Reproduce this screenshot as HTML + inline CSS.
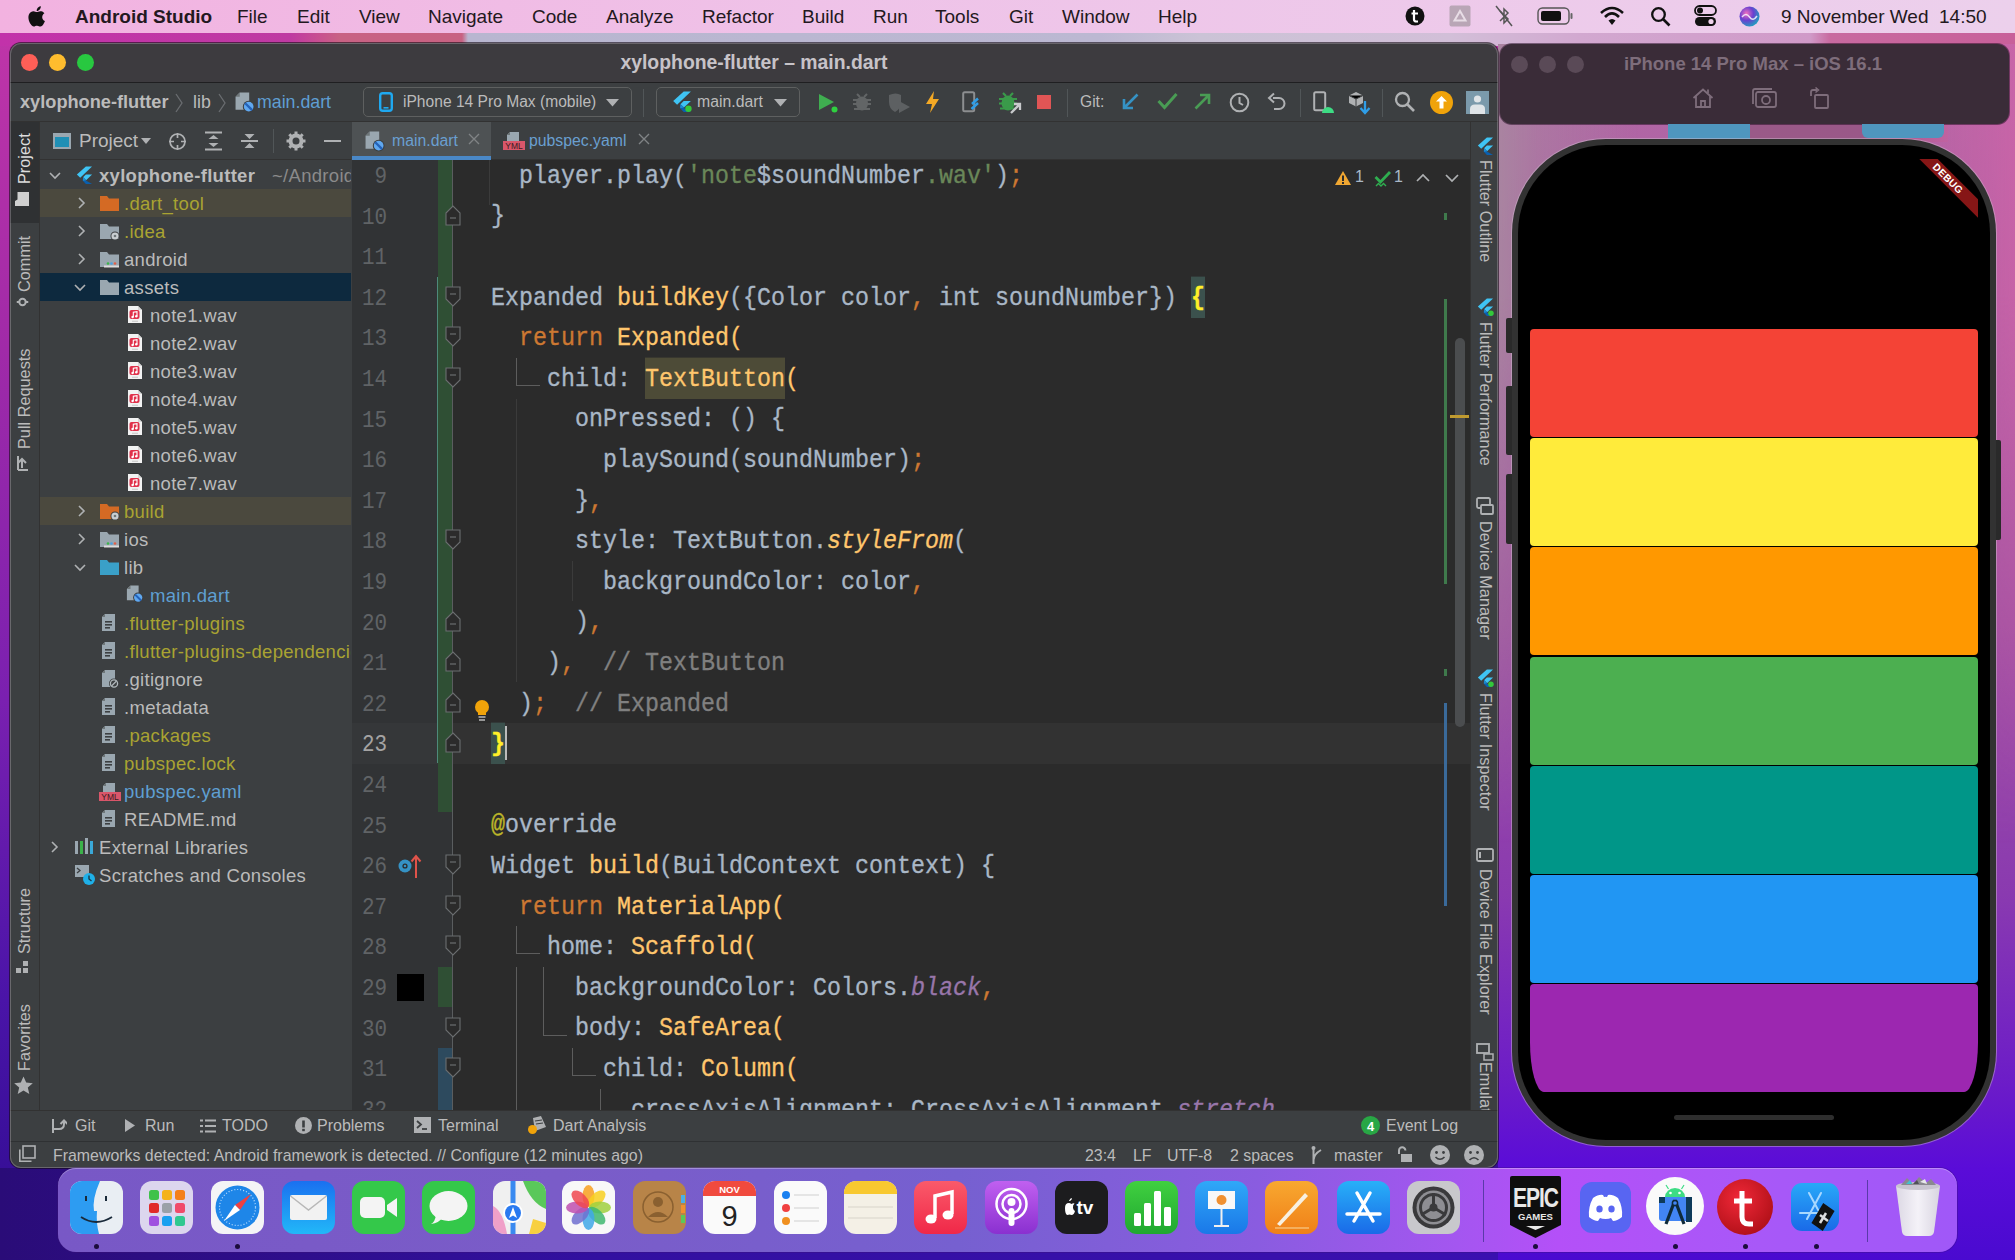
<!DOCTYPE html><html><head><meta charset="utf-8"><style>
*{box-sizing:border-box;margin:0;padding:0}
html,body{width:2015px;height:1260px;overflow:hidden}
body{position:relative;font-family:"Liberation Sans",sans-serif;background:#5a1cb0}
.a{position:absolute}
.nw{white-space:nowrap}
.mono{font-family:"Liberation Mono",monospace}
#menubar{position:absolute;left:0;top:0;width:2015px;height:33px;background:linear-gradient(90deg,#f2b2e0 0%,#efc2e8 40%,#ecd0ec 100%);color:#231820;font-size:19px}
#menubar span{position:absolute;top:6px;white-space:nowrap}
#ide{position:absolute;left:10px;top:43px;width:1488px;height:1125px;border-radius:11px;overflow:hidden;background:#3c3f41;box-shadow:0 0 0 1px rgba(20,10,20,.6)}
#ideb{position:absolute;left:10px;top:43px;width:1488px;height:1125px;border-radius:11px;box-shadow:inset 0 0 0 1px rgba(190,180,190,.35);pointer-events:none}
.title{position:absolute;left:0;top:0;width:1488px;height:40px;background:#3d3b3f;border-bottom:1px solid #1f1f21}
.tl{position:absolute;top:11px;width:17px;height:17px;border-radius:50%}
.nav{position:absolute;left:0;top:41px;width:1488px;height:38px;background:#3c3f41;border-bottom:1px solid #323232;color:#bbbbbb;font-size:18.5px}
.nav span{position:absolute;white-space:nowrap;top:8px}
.combo{position:absolute;border:1px solid #5e6060;border-radius:5px;height:29px;top:4px}
.sep{position:absolute;width:1px;background:#515658}
.lstrip{position:absolute;left:0;top:79px;width:30px;height:988px;background:#3c3f41;border-right:1px solid #323232}
.vlab{position:absolute;white-space:nowrap;color:#bbbbbb;font-size:17px;transform-origin:0 0}
.proj{position:absolute;left:30px;top:79px;width:311px;height:988px;background:#3c3f41;overflow:hidden}
.phead{position:absolute;left:0;top:0;width:311px;height:38px;border-bottom:1px solid #323232}
.row{position:absolute;left:0;width:311px;height:28px;white-space:nowrap;font-size:18.5px;color:#bbbbbb;letter-spacing:0.3px}
.row span{position:absolute;top:4px}
.tabs{position:absolute;left:342px;top:79px;width:1118px;height:38px;background:#3c3f41;border-bottom:1px solid #323232}
.gut{position:absolute;left:342px;top:117px;width:101px;height:950px;background:#313335;overflow:hidden}
.ed{position:absolute;left:443px;top:117px;width:1017px;height:950px;background:#2b2b2b;overflow:hidden}
.rstrip{position:absolute;left:1460px;top:79px;width:28px;height:988px;background:#3c3f41;border-left:1px solid #323232}
.btools{position:absolute;left:0;top:1067px;width:1488px;height:31px;background:#3c3f41;border-top:1px solid #323232;font-size:16px;color:#bbbbbb}
.btools span{position:absolute;white-space:nowrap;top:6px}
.status span{position:absolute;white-space:nowrap;top:5px}
.status{position:absolute;left:0;top:1098px;width:1488px;height:27px;background:#3c3f41;border-top:1px solid #2f3133;font-size:15.9px;color:#bbbbbb}
.ln{position:absolute;right:66px;width:60px;text-align:right;font-size:22.5px;color:#606366;font-family:"Liberation Mono",monospace;transform:translateY(2.5px) scale(0.93,1.1);transform-origin:100% 50%}
.cl{position:absolute;left:10px;white-space:pre;font-size:23.33px;color:#a9b7c6;font-family:"Liberation Mono",monospace;line-height:28px;transform:translateY(2px) scaleY(1.09);transform-origin:0 26.5px;-webkit-text-stroke-width:0.3px}
.k{color:#cc7832}.f{color:#ffc66d}.s{color:#6a8759}.c{color:#808080}.p{color:#9876aa;font-style:italic}.fi{color:#ffc66d;font-style:italic}.an{color:#bbb529}
</style></head><body>
<div class="a" style="left:0;top:0;width:2015px;height:1260px;background:linear-gradient(180deg,#c236a8 0px,#a02aa8 350px,#7a20b0 700px,#4a14a8 1000px,#2e0c90 1260px)"></div>
<div class="a" style="left:0;top:30px;width:2015px;height:16px;background:linear-gradient(90deg,#c232aa 0px,#bf3aa2 290px,#c85090 320px,#c86284 340px,#c86282 462px,#b8b6d0 468px,#bcb8d2 1100px,#cbc3d6 1200px,#d2bfd8 1450px,#d2a8d0 1580px,#d09ac8 1810px,#c86aa0 1830px,#c8609a 2015px)"></div>
<div class="a" style="left:1498px;top:44px;width:517px;height:1124px;background:linear-gradient(180deg,#b46aa6 0px,#aa5ca2 250px,#a050a2 580px,#8a3ab0 850px,#6c1cc8 1040px,#5a0cd8 1124px)"></div>
<div class="a" style="left:1498px;top:44px;width:517px;height:1124px;background:linear-gradient(90deg,rgba(168,136,160,.9) 0px,rgba(168,136,160,.5) 40px,rgba(168,136,160,0) 140px,rgba(200,100,170,0) 400px,rgba(205,100,168,.8) 517px);-webkit-mask-image:linear-gradient(180deg,#000 0px,#000 250px,rgba(0,0,0,.4) 550px,transparent 800px)"></div>
<div class="a" style="left:1668px;top:120px;width:280px;height:22px;background:linear-gradient(90deg,#a87098 0px,#9a5a88 82px,#9a5888 194px,#c062a0 280px)"></div>
<div class="a" style="left:0;top:1168px;width:1498px;height:92px;background:linear-gradient(90deg,#2a0c78 0px,#3210a0 600px,#3a10b0 1498px)"></div>
<div class="a" style="left:1498px;top:1168px;width:517px;height:92px;background:linear-gradient(180deg,#5a0cd8 0px,#4a0ad0 92px)"></div>
<div id="menubar">
<span style="left:75px;font-weight:bold;">Android Studio</span>
<span style="left:237px;">File</span>
<span style="left:297px;">Edit</span>
<span style="left:359px;">View</span>
<span style="left:428px;">Navigate</span>
<span style="left:532px;">Code</span>
<span style="left:606px;">Analyze</span>
<span style="left:702px;">Refactor</span>
<span style="left:802px;">Build</span>
<span style="left:873px;">Run</span>
<span style="left:935px;">Tools</span>
<span style="left:1009px;">Git</span>
<span style="left:1062px;">Window</span>
<span style="left:1158px;">Help</span>
<span style="left:1781px;">9 November Wed</span>
<span style="left:1939px;">14:50</span>
</div>
<div id="ide">
<div class="title"><div class="tl" style="left:11px;background:#fe5f57"></div><div class="tl" style="left:39px;background:#febc2e"></div><div class="tl" style="left:67px;background:#28c840"></div>
<div class="a nw" style="left:0;width:1488px;top:8px;text-align:center;font-weight:bold;font-size:19.4px;color:#c7c3c8;padding-left:0px">xylophone-flutter – main.dart</div></div>
<div class="nav">
<span style="left:10px;top:8px;font-weight:bold;font-size:18.2px">xylophone-flutter</span>
<span style="left:183px;top:8px;font-size:17.75px">lib</span>
<span style="left:247px;top:8px;font-size:17.75px;color:#5f9ed3">main.dart</span>
<div class="combo" style="left:353px;top:3px;width:269px;height:30px"></div>
<span style="left:393px;top:9px;font-size:15.6px">iPhone 14 Pro Max (mobile)</span>
<div class="sep" style="left:633px;top:5px;height:28px"></div>
<div class="combo" style="left:646px;top:3px;width:144px;height:30px"></div>
<span style="left:687px;top:9px;font-size:15.8px">main.dart</span>
<div class="sep" style="left:1057px;top:5px;height:28px"></div>
<span style="left:1070px;top:9px;font-size:15.6px">Git:</span>
<div class="sep" style="left:1290px;top:5px;height:28px"></div>
<div class="sep" style="left:1372px;top:5px;height:28px"></div>
</div>
<div class="lstrip">
<div class="a" style="left:0;top:0;width:29px;height:101px;background:#2f3133"></div>
<div class="vlab" style="left:5px;top:62px;font-size:16.3px;transform:rotate(-90deg);color:#dcdcdc">Project</div>
<div class="vlab" style="left:5px;top:170px;font-size:16.3px;transform:rotate(-90deg);">Commit</div>
<div class="vlab" style="left:5px;top:327px;font-size:16.3px;transform:rotate(-90deg);">Pull Requests</div>
<div class="vlab" style="left:5px;top:832px;font-size:16.3px;transform:rotate(-90deg);">Structure</div>
<div class="vlab" style="left:5px;top:949px;font-size:16.3px;transform:rotate(-90deg);">Favorites</div>
</div>
<div class="proj"><div class="phead">
<div class="a nw" style="left:39px;top:8px;font-size:19px;color:#bbbbbb">Project</div>
</div>
<div class="row" style="top:39px;">
<span style="left:59px;color:#bbbbbb;font-weight:bold">xylophone-flutter</span><span style="left:232px;color:#8b8b8b">~/AndroidStudioProjects/xylophone-flutter</span>
</div>
<div class="row" style="top:67px;background:#4b493e;">
<span style="left:84px;color:#a9a332;">.dart_tool</span>
</div>
<div class="row" style="top:95px;">
<span style="left:84px;color:#a9a332;">.idea</span>
</div>
<div class="row" style="top:123px;">
<span style="left:84px;color:#bbbbbb;">android</span>
</div>
<div class="row" style="top:151px;background:#0d293e;">
<span style="left:84px;color:#bbbbbb;">assets</span>
</div>
<div class="row" style="top:179px;">
<span style="left:110px;color:#bbbbbb;">note1.wav</span>
</div>
<div class="row" style="top:207px;">
<span style="left:110px;color:#bbbbbb;">note2.wav</span>
</div>
<div class="row" style="top:235px;">
<span style="left:110px;color:#bbbbbb;">note3.wav</span>
</div>
<div class="row" style="top:263px;">
<span style="left:110px;color:#bbbbbb;">note4.wav</span>
</div>
<div class="row" style="top:291px;">
<span style="left:110px;color:#bbbbbb;">note5.wav</span>
</div>
<div class="row" style="top:319px;">
<span style="left:110px;color:#bbbbbb;">note6.wav</span>
</div>
<div class="row" style="top:347px;">
<span style="left:110px;color:#bbbbbb;">note7.wav</span>
</div>
<div class="row" style="top:375px;background:#4b493e;">
<span style="left:84px;color:#a9a332;">build</span>
</div>
<div class="row" style="top:403px;">
<span style="left:84px;color:#bbbbbb;">ios</span>
</div>
<div class="row" style="top:431px;">
<span style="left:84px;color:#bbbbbb;">lib</span>
</div>
<div class="row" style="top:459px;">
<span style="left:110px;color:#5f9fd2;">main.dart</span>
</div>
<div class="row" style="top:487px;">
<span style="left:84px;color:#a9a332;">.flutter-plugins</span>
</div>
<div class="row" style="top:515px;">
<span style="left:84px;color:#a9a332;">.flutter-plugins-dependencies</span>
</div>
<div class="row" style="top:543px;">
<span style="left:84px;color:#bbbbbb;">.gitignore</span>
</div>
<div class="row" style="top:571px;">
<span style="left:84px;color:#bbbbbb;">.metadata</span>
</div>
<div class="row" style="top:599px;">
<span style="left:84px;color:#a9a332;">.packages</span>
</div>
<div class="row" style="top:627px;">
<span style="left:84px;color:#a9a332;">pubspec.lock</span>
</div>
<div class="row" style="top:655px;">
<span style="left:84px;color:#5f9fd2;">pubspec.yaml</span>
</div>
<div class="row" style="top:683px;">
<span style="left:84px;color:#bbbbbb;">README.md</span>
</div>
<div class="row" style="top:711px;">
<span style="left:59px;color:#bbbbbb;">External Libraries</span>
</div>
<div class="row" style="top:739px;">
<span style="left:59px;color:#bbbbbb;">Scratches and Consoles</span>
</div>
</div>
<div class="tabs">
<div class="a" style="left:0;top:0;width:139px;height:37px;background:#4e5254"></div>
<div class="a" style="left:0;top:34px;width:139px;height:4px;background:#4a88c7"></div>
<div class="a nw" style="left:40px;top:10px;font-size:15.8px;color:#6a9fd0">main.dart</div>
<div class="a nw" style="left:177px;top:10px;font-size:15.8px;color:#6a9fd0">pubspec.yaml</div>
</div>
<div class="gut">
<div class="a" style="left:0;top:563.1px;width:101px;height:40.6px;background:#353739"></div>
<div class="ln" style="top:1.0px;color:#606366">9</div>
<div class="ln" style="top:41.6px;color:#606366">10</div>
<div class="ln" style="top:82.2px;color:#606366">11</div>
<div class="ln" style="top:122.8px;color:#606366">12</div>
<div class="ln" style="top:163.4px;color:#606366">13</div>
<div class="ln" style="top:204.0px;color:#606366">14</div>
<div class="ln" style="top:244.6px;color:#606366">15</div>
<div class="ln" style="top:285.2px;color:#606366">16</div>
<div class="ln" style="top:325.8px;color:#606366">17</div>
<div class="ln" style="top:366.4px;color:#606366">18</div>
<div class="ln" style="top:407.0px;color:#606366">19</div>
<div class="ln" style="top:447.6px;color:#606366">20</div>
<div class="ln" style="top:488.2px;color:#606366">21</div>
<div class="ln" style="top:528.8px;color:#606366">22</div>
<div class="ln" style="top:569.4px;color:#a4a3a3">23</div>
<div class="ln" style="top:610.0px;color:#606366">24</div>
<div class="ln" style="top:650.6px;color:#606366">25</div>
<div class="ln" style="top:691.2px;color:#606366">26</div>
<div class="ln" style="top:731.8px;color:#606366">27</div>
<div class="ln" style="top:772.4px;color:#606366">28</div>
<div class="ln" style="top:813.0px;color:#606366">29</div>
<div class="ln" style="top:853.6px;color:#606366">30</div>
<div class="ln" style="top:894.2px;color:#606366">31</div>
<div class="ln" style="top:934.8px;color:#606366">32</div>
</div>
<div class="ed">
<div class="a" style="left:0;top:563.1px;width:1017px;height:40.6px;background:#323232"></div>
<div class="cl" style="top:-5.3px;line-height:40.6px">    player.play(<span class="s">&#x27;note</span>$soundNumber<span class="s">.wav&#x27;</span>)<span class="k">;</span></div>
<div class="cl" style="top:35.3px;line-height:40.6px">  }</div>
<div class="cl" style="top:75.9px;line-height:40.6px"></div>
<div class="cl" style="top:116.5px;line-height:40.6px">  Expanded <span class="f">buildKey</span>({Color color<span class="k">,</span> int soundNumber}) <span style="display:inline-block;height:37.6px;line-height:40.6px;vertical-align:top;background:#3b514d;color:#ffef28;font-weight:bold">{</span></div>
<div class="cl" style="top:157.1px;line-height:40.6px">    <span class="k">return</span> <span class="f">Expanded(</span></div>
<div class="cl" style="top:197.7px;line-height:40.6px">      child: <span class="f" style="display:inline-block;height:37.6px;line-height:40.6px;vertical-align:top;background:#4d4b37">TextButton</span><span class="f">(</span></div>
<div class="cl" style="top:238.3px;line-height:40.6px">        onPressed: () {</div>
<div class="cl" style="top:278.9px;line-height:40.6px">          playSound(soundNumber)<span class="k">;</span></div>
<div class="cl" style="top:319.5px;line-height:40.6px">        }<span class="k">,</span></div>
<div class="cl" style="top:360.1px;line-height:40.6px">        style: TextButton.<span class="fi">styleFrom</span>(</div>
<div class="cl" style="top:400.7px;line-height:40.6px">          backgroundColor: color<span class="k">,</span></div>
<div class="cl" style="top:441.3px;line-height:40.6px">        )<span class="k">,</span></div>
<div class="cl" style="top:481.9px;line-height:40.6px">      )<span class="k">,</span>  <span class="c">// TextButton</span></div>
<div class="cl" style="top:522.5px;line-height:40.6px">    )<span class="k">;</span>  <span class="c">// Expanded</span></div>
<div class="cl" style="top:563.1px;line-height:40.6px">  <span style="display:inline-block;height:37.6px;line-height:40.6px;vertical-align:top;background:#3b514d;color:#ffef28;font-weight:bold">}</span></div>
<div class="cl" style="top:603.7px;line-height:40.6px"></div>
<div class="cl" style="top:644.3px;line-height:40.6px">  <span class="an">@</span>override</div>
<div class="cl" style="top:684.9px;line-height:40.6px">  Widget <span class="f">build</span>(BuildContext context) {</div>
<div class="cl" style="top:725.5px;line-height:40.6px">    <span class="k">return</span> <span class="f">MaterialApp(</span></div>
<div class="cl" style="top:766.1px;line-height:40.6px">      home: <span class="f">Scaffold(</span></div>
<div class="cl" style="top:806.7px;line-height:40.6px">        backgroundColor: Colors.<span class="p">black</span><span class="k">,</span></div>
<div class="cl" style="top:847.3px;line-height:40.6px">        body: <span class="f">SafeArea(</span></div>
<div class="cl" style="top:887.9px;line-height:40.6px">          child: <span class="f">Column(</span></div>
<div class="cl" style="top:928.5px;line-height:40.6px">            crossAxisAlignment: CrossAxisAlignment.<span class="p">stretch</span><span class="k">,</span></div>
</div>
<div class="rstrip">
<div class="vlab" style="left:24px;top:38px;font-size:16.3px;transform:rotate(90deg)">Flutter Outline</div>
<div class="vlab" style="left:24px;top:200px;font-size:16.3px;transform:rotate(90deg)">Flutter Performance</div>
<div class="vlab" style="left:24px;top:399px;font-size:16.3px;transform:rotate(90deg)">Device Manager</div>
<div class="vlab" style="left:24px;top:571px;font-size:16.3px;transform:rotate(90deg)">Flutter Inspector</div>
<div class="vlab" style="left:24px;top:747px;font-size:16.3px;transform:rotate(90deg)">Device File Explorer</div>
<div class="vlab" style="left:24px;top:940px;font-size:16.3px;transform:rotate(90deg)">Emulator</div>
</div>
<div class="btools">
<span style="left:65px">Git</span>
<span style="left:135px">Run</span>
<span style="left:212px">TODO</span>
<span style="left:307px">Problems</span>
<span style="left:428px">Terminal</span>
<span style="left:543px">Dart Analysis</span>
<span style="left:1376px">Event Log</span>
</div>
<div class="status">
<span style="left:43px">Frameworks detected: Android framework is detected. // Configure (12 minutes ago)</span>
<span style="left:1075px">23:4</span>
<span style="left:1123px">LF</span>
<span style="left:1157px">UTF-8</span>
<span style="left:1220px">2 spaces</span>
<span style="left:1324px">master</span>
</div>
</div>
<div id="ideb"></div>
<svg class="a" style="left:49px;top:171px;" width="12" height="12" viewBox="0 0 12 12"><path d="M1 2 L6 7 L11 2" stroke="#afb1b3" stroke-width="1.6" fill="none"/></svg>
<svg class="a" style="left:75px;top:166px;" width="18" height="18" viewBox="0 0 19 19"><path d="M11.5 0.5 L18 0.5 L5.5 12.5 L2 9 Z" fill="#3fc4f4"/><path d="M11.5 9 L18 9 L11.7 15 L8.5 12 Z" fill="#3fc4f4"/><path d="M8.5 12 L11.7 15 L11.5 15.3 L18 19 L11.5 19 L8.3 15.6 Z" fill="#0a5fae"/><path d="M8.5 12 L11.7 15 L8.3 15.6 Z" fill="#1d8ad0"/></svg>
<svg class="a" style="left:77px;top:197px;" width="12" height="12" viewBox="0 0 12 12"><path d="M2 1 L7 6 L2 11" stroke="#afb1b3" stroke-width="1.6" fill="none"/></svg>
<svg class="a" style="left:99px;top:194px;" width="21" height="18" viewBox="0 0 21 18"><path d="M1 2 H8 L10 4.5 H20 V17 H1 Z" fill="#d46a24"/></svg>
<svg class="a" style="left:77px;top:225px;" width="12" height="12" viewBox="0 0 12 12"><path d="M2 1 L7 6 L2 11" stroke="#afb1b3" stroke-width="1.6" fill="none"/></svg>
<svg class="a" style="left:99px;top:222px;" width="21" height="18" viewBox="0 0 21 18"><path d="M1 2 H8 L10 4.5 H20 V17 H1 Z" fill="#9aa7b0"/><circle cx="16" cy="14" r="4.5" fill="#3c3f41"/><circle cx="16" cy="14" r="3.6" fill="#c9ced1"/><circle cx="16" cy="14" r="1.3" fill="#6e7678"/></svg>
<svg class="a" style="left:77px;top:253px;" width="12" height="12" viewBox="0 0 12 12"><path d="M2 1 L7 6 L2 11" stroke="#afb1b3" stroke-width="1.6" fill="none"/></svg>
<svg class="a" style="left:99px;top:250px;" width="21" height="18" viewBox="0 0 21 18"><path d="M1 2 H8 L10 4.5 H20 V17 H1 Z" fill="#9aa7b0"/><rect x="5" y="15.5" width="15" height="2" fill="#ddd"/><circle cx="9" cy="13.5" r="1.3" fill="#3bb34a"/><circle cx="12.5" cy="13.5" r="1.3" fill="#4aa2e0"/><circle cx="16" cy="13.5" r="1.3" fill="#e0604a"/></svg>
<svg class="a" style="left:74px;top:283px;" width="12" height="12" viewBox="0 0 12 12"><path d="M1 2 L6 7 L11 2" stroke="#afb1b3" stroke-width="1.6" fill="none"/></svg>
<svg class="a" style="left:99px;top:278px;" width="21" height="18" viewBox="0 0 21 18"><path d="M1 2 H8 L10 4.5 H20 V17 H1 Z" fill="#9aa7b0"/></svg>
<svg class="a" style="left:127px;top:305px;" width="16" height="19" viewBox="0 0 16 19"><path d="M1 1 H11 L15 5 V18 H1 Z" fill="#f2f2f2"/><path d="M11 1 V5 H15" fill="#d8d8d8"/><rect x="2.5" y="5" width="10" height="9" rx="2" fill="#e0304a"/><path d="M6.3 12 V7.3 L10 6.6 V11" stroke="#fff" stroke-width="1.1" fill="none"/><circle cx="5.6" cy="12" r="1.2" fill="#fff"/><circle cx="9.3" cy="11.2" r="1.2" fill="#fff"/><rect x="5" y="15.8" width="6" height=".8" fill="#bbb"/></svg>
<svg class="a" style="left:127px;top:333px;" width="16" height="19" viewBox="0 0 16 19"><path d="M1 1 H11 L15 5 V18 H1 Z" fill="#f2f2f2"/><path d="M11 1 V5 H15" fill="#d8d8d8"/><rect x="2.5" y="5" width="10" height="9" rx="2" fill="#e0304a"/><path d="M6.3 12 V7.3 L10 6.6 V11" stroke="#fff" stroke-width="1.1" fill="none"/><circle cx="5.6" cy="12" r="1.2" fill="#fff"/><circle cx="9.3" cy="11.2" r="1.2" fill="#fff"/><rect x="5" y="15.8" width="6" height=".8" fill="#bbb"/></svg>
<svg class="a" style="left:127px;top:361px;" width="16" height="19" viewBox="0 0 16 19"><path d="M1 1 H11 L15 5 V18 H1 Z" fill="#f2f2f2"/><path d="M11 1 V5 H15" fill="#d8d8d8"/><rect x="2.5" y="5" width="10" height="9" rx="2" fill="#e0304a"/><path d="M6.3 12 V7.3 L10 6.6 V11" stroke="#fff" stroke-width="1.1" fill="none"/><circle cx="5.6" cy="12" r="1.2" fill="#fff"/><circle cx="9.3" cy="11.2" r="1.2" fill="#fff"/><rect x="5" y="15.8" width="6" height=".8" fill="#bbb"/></svg>
<svg class="a" style="left:127px;top:389px;" width="16" height="19" viewBox="0 0 16 19"><path d="M1 1 H11 L15 5 V18 H1 Z" fill="#f2f2f2"/><path d="M11 1 V5 H15" fill="#d8d8d8"/><rect x="2.5" y="5" width="10" height="9" rx="2" fill="#e0304a"/><path d="M6.3 12 V7.3 L10 6.6 V11" stroke="#fff" stroke-width="1.1" fill="none"/><circle cx="5.6" cy="12" r="1.2" fill="#fff"/><circle cx="9.3" cy="11.2" r="1.2" fill="#fff"/><rect x="5" y="15.8" width="6" height=".8" fill="#bbb"/></svg>
<svg class="a" style="left:127px;top:417px;" width="16" height="19" viewBox="0 0 16 19"><path d="M1 1 H11 L15 5 V18 H1 Z" fill="#f2f2f2"/><path d="M11 1 V5 H15" fill="#d8d8d8"/><rect x="2.5" y="5" width="10" height="9" rx="2" fill="#e0304a"/><path d="M6.3 12 V7.3 L10 6.6 V11" stroke="#fff" stroke-width="1.1" fill="none"/><circle cx="5.6" cy="12" r="1.2" fill="#fff"/><circle cx="9.3" cy="11.2" r="1.2" fill="#fff"/><rect x="5" y="15.8" width="6" height=".8" fill="#bbb"/></svg>
<svg class="a" style="left:127px;top:445px;" width="16" height="19" viewBox="0 0 16 19"><path d="M1 1 H11 L15 5 V18 H1 Z" fill="#f2f2f2"/><path d="M11 1 V5 H15" fill="#d8d8d8"/><rect x="2.5" y="5" width="10" height="9" rx="2" fill="#e0304a"/><path d="M6.3 12 V7.3 L10 6.6 V11" stroke="#fff" stroke-width="1.1" fill="none"/><circle cx="5.6" cy="12" r="1.2" fill="#fff"/><circle cx="9.3" cy="11.2" r="1.2" fill="#fff"/><rect x="5" y="15.8" width="6" height=".8" fill="#bbb"/></svg>
<svg class="a" style="left:127px;top:473px;" width="16" height="19" viewBox="0 0 16 19"><path d="M1 1 H11 L15 5 V18 H1 Z" fill="#f2f2f2"/><path d="M11 1 V5 H15" fill="#d8d8d8"/><rect x="2.5" y="5" width="10" height="9" rx="2" fill="#e0304a"/><path d="M6.3 12 V7.3 L10 6.6 V11" stroke="#fff" stroke-width="1.1" fill="none"/><circle cx="5.6" cy="12" r="1.2" fill="#fff"/><circle cx="9.3" cy="11.2" r="1.2" fill="#fff"/><rect x="5" y="15.8" width="6" height=".8" fill="#bbb"/></svg>
<svg class="a" style="left:77px;top:505px;" width="12" height="12" viewBox="0 0 12 12"><path d="M2 1 L7 6 L2 11" stroke="#afb1b3" stroke-width="1.6" fill="none"/></svg>
<svg class="a" style="left:99px;top:502px;" width="21" height="18" viewBox="0 0 21 18"><path d="M1 2 H8 L10 4.5 H20 V17 H1 Z" fill="#d46a24"/><circle cx="16" cy="14" r="4.5" fill="#3c3f41"/><circle cx="16" cy="14" r="3.6" fill="#c9ced1"/><circle cx="16" cy="14" r="1.3" fill="#6e7678"/></svg>
<svg class="a" style="left:77px;top:533px;" width="12" height="12" viewBox="0 0 12 12"><path d="M2 1 L7 6 L2 11" stroke="#afb1b3" stroke-width="1.6" fill="none"/></svg>
<svg class="a" style="left:99px;top:530px;" width="21" height="18" viewBox="0 0 21 18"><path d="M1 2 H8 L10 4.5 H20 V17 H1 Z" fill="#9aa7b0"/><rect x="5" y="15.5" width="15" height="2" fill="#ddd"/><circle cx="9" cy="13.5" r="1.3" fill="#3bb34a"/><circle cx="12.5" cy="13.5" r="1.3" fill="#4aa2e0"/><circle cx="16" cy="13.5" r="1.3" fill="#e0604a"/></svg>
<svg class="a" style="left:74px;top:563px;" width="12" height="12" viewBox="0 0 12 12"><path d="M1 2 L6 7 L11 2" stroke="#afb1b3" stroke-width="1.6" fill="none"/></svg>
<svg class="a" style="left:99px;top:558px;" width="21" height="18" viewBox="0 0 21 18"><path d="M1 2 H8 L10 4.5 H20 V17 H1 Z" fill="#3aa0c8"/></svg>
<svg class="a" style="left:126px;top:585px;" width="18" height="18" viewBox="0 0 19 20"><path d="M4.5 0.5 H13.5 V17 H0.5 V4.5 Z" fill="#9aa7b0"/><path d="M0.5 4.5 L4.5 0.5 V4.5 Z" fill="#6e7678"/><circle cx="13" cy="14" r="5.6" fill="#3c3f41"/><circle cx="13" cy="14" r="4.6" fill="#60a8f0"/><path d="M9.7 10.7 L16.3 17.3" stroke="#2462b8" stroke-width="2.2"/></svg>
<svg class="a" style="left:101px;top:613px;" width="15" height="19" viewBox="0 0 15 19"><path d="M4 1 H14 V18 H1 V4 Z" fill="#9aa7b0"/><path d="M1 4 L4 1 V4 Z" fill="#6e7678"/><rect x="4" y="8" width="7" height="1.6" fill="#3c3f41"/><rect x="4" y="11" width="7" height="1.6" fill="#3c3f41"/><rect x="4" y="14" width="5" height="1.6" fill="#3c3f41"/></svg>
<svg class="a" style="left:101px;top:641px;" width="15" height="19" viewBox="0 0 15 19"><path d="M4 1 H14 V18 H1 V4 Z" fill="#9aa7b0"/><path d="M1 4 L4 1 V4 Z" fill="#6e7678"/><rect x="4" y="8" width="7" height="1.6" fill="#3c3f41"/><rect x="4" y="11" width="7" height="1.6" fill="#3c3f41"/><rect x="4" y="14" width="5" height="1.6" fill="#3c3f41"/></svg>
<svg class="a" style="left:101px;top:697px;" width="15" height="19" viewBox="0 0 15 19"><path d="M4 1 H14 V18 H1 V4 Z" fill="#9aa7b0"/><path d="M1 4 L4 1 V4 Z" fill="#6e7678"/><rect x="4" y="8" width="7" height="1.6" fill="#3c3f41"/><rect x="4" y="11" width="7" height="1.6" fill="#3c3f41"/><rect x="4" y="14" width="5" height="1.6" fill="#3c3f41"/></svg>
<svg class="a" style="left:101px;top:725px;" width="15" height="19" viewBox="0 0 15 19"><path d="M4 1 H14 V18 H1 V4 Z" fill="#9aa7b0"/><path d="M1 4 L4 1 V4 Z" fill="#6e7678"/><rect x="4" y="8" width="7" height="1.6" fill="#3c3f41"/><rect x="4" y="11" width="7" height="1.6" fill="#3c3f41"/><rect x="4" y="14" width="5" height="1.6" fill="#3c3f41"/></svg>
<svg class="a" style="left:101px;top:753px;" width="15" height="19" viewBox="0 0 15 19"><path d="M4 1 H14 V18 H1 V4 Z" fill="#9aa7b0"/><path d="M1 4 L4 1 V4 Z" fill="#6e7678"/><rect x="4" y="8" width="7" height="1.6" fill="#3c3f41"/><rect x="4" y="11" width="7" height="1.6" fill="#3c3f41"/><rect x="4" y="14" width="5" height="1.6" fill="#3c3f41"/></svg>
<svg class="a" style="left:101px;top:809px;" width="15" height="19" viewBox="0 0 15 19"><path d="M4 1 H14 V18 H1 V4 Z" fill="#9aa7b0"/><path d="M1 4 L4 1 V4 Z" fill="#6e7678"/><rect x="4" y="8" width="7" height="1.6" fill="#3c3f41"/><rect x="4" y="11" width="7" height="1.6" fill="#3c3f41"/><rect x="4" y="14" width="5" height="1.6" fill="#3c3f41"/></svg>
<svg class="a" style="left:101px;top:669px;" width="19" height="20" viewBox="0 0 19 20"><path d="M4 1 H14 V18 H1 V4 Z" fill="#9aa7b0"/><path d="M1 4 L4 1 V4 Z" fill="#6e7678"/><circle cx="13" cy="14.5" r="5" fill="#3c3f41"/><circle cx="13" cy="14.5" r="3.6" fill="none" stroke="#b0b8bb" stroke-width="1.3"/><path d="M10.5 17 L15.5 12" stroke="#b0b8bb" stroke-width="1.3"/></svg>
<svg class="a" style="left:99px;top:782px;" width="22" height="19" viewBox="0 0 22 19"><path d="M7 1 H16 V12 H4 V4 Z" fill="#9aa7b0"/><path d="M4 4 L7 1 V4 Z" fill="#6e7678"/><rect x="0" y="10" width="22" height="9" fill="#d9566a"/><text x="11" y="17.6" font-size="8.5" text-anchor="middle" fill="#3a1c22" font-family="Liberation Sans">YML</text></svg>
<svg class="a" style="left:50px;top:841px;" width="12" height="12" viewBox="0 0 12 12"><path d="M2 1 L7 6 L2 11" stroke="#afb1b3" stroke-width="1.6" fill="none"/></svg>
<svg class="a" style="left:74px;top:837px;" width="22" height="18" viewBox="0 0 22 18"><rect x="1" y="4" width="3" height="13" fill="#9aa7b0"/><rect x="6" y="4" width="3" height="13" fill="#3bb34a"/><rect x="11" y="1" width="3" height="16" fill="#9aa7b0"/><rect x="16" y="4" width="3" height="13" fill="#3aa8d8"/></svg>
<svg class="a" style="left:74px;top:864px;" width="22" height="22" viewBox="0 0 22 22"><rect x="1" y="1" width="14" height="12" fill="#9aa7b0"/><path d="M3 4 L6 6.5 L3 9" stroke="#3c3f41" stroke-width="1.3" fill="none"/><circle cx="15" cy="15" r="6" fill="#1fb0e8"/><path d="M15 11.5 V15 L17.5 17" stroke="#1a3a48" stroke-width="1.4" fill="none"/></svg>
<svg class="a" style="left:52px;top:132px;" width="20" height="18" viewBox="0 0 20 18"><rect x="1" y="1" width="18" height="16" fill="#9aa7b0"/><rect x="3" y="5" width="14" height="10" fill="#1f8fb5"/></svg>
<svg class="a" style="left:141px;top:138px;" width="10" height="7" viewBox="0 0 10 7"><path d="M0 0 H10 L5 6 Z" fill="#afb1b3"/></svg>
<svg class="a" style="left:168px;top:132px;" width="19" height="19" viewBox="0 0 19 19"><circle cx="9.5" cy="9.5" r="7.5" stroke="#afb1b3" stroke-width="1.7" fill="none"/><path d="M9.5 1 V6 M9.5 13 V18 M1 9.5 H6 M13 9.5 H18" stroke="#afb1b3" stroke-width="1.7"/></svg>
<svg class="a" style="left:205px;top:131px;" width="17" height="20" viewBox="0 0 17 20"><path d="M0 1.5 H17 M0 18.5 H17" stroke="#afb1b3" stroke-width="2"/><path d="M3.5 8 L8.5 4 L13.5 8 Z M3.5 12 L8.5 16 L13.5 12 Z" fill="#afb1b3"/></svg>
<svg class="a" style="left:241px;top:131px;" width="17" height="20" viewBox="0 0 17 20"><path d="M0 10 H17" stroke="#afb1b3" stroke-width="2"/><path d="M3.5 3 L8.5 8 L13.5 3 Z M3.5 17 L8.5 12 L13.5 17 Z" fill="#afb1b3"/></svg>
<div class="a" style="left:273px;top:129px;width:1px;height:24px;background:#515658"></div>
<svg class="a" style="left:286px;top:131px;" width="20" height="20" viewBox="0 0 20 20"><circle cx="10" cy="10" r="5.5" fill="none" stroke="#afb1b3" stroke-width="4"/><path d="M10 0.5 V4 M10 16 V19.5 M0.5 10 H4 M16 10 H19.5 M3.3 3.3 L5.7 5.7 M14.3 14.3 L16.7 16.7 M3.3 16.7 L5.7 14.3 M14.3 5.7 L16.7 3.3" stroke="#afb1b3" stroke-width="3"/><circle cx="10" cy="10" r="2" fill="#3c3f41"/></svg>
<div class="a" style="left:324px;top:140px;width:17px;height:2px;background:#afb1b3"></div>
<svg class="a" style="left:365px;top:131px;" width="20" height="21" viewBox="0 0 19 20"><path d="M4.5 0.5 H13.5 V17 H0.5 V4.5 Z" fill="#9aa7b0"/><path d="M0.5 4.5 L4.5 0.5 V4.5 Z" fill="#6e7678"/><circle cx="13" cy="14" r="5.6" fill="#3c3f41"/><circle cx="13" cy="14" r="4.6" fill="#60a8f0"/><path d="M9.7 10.7 L16.3 17.3" stroke="#2462b8" stroke-width="2.2"/></svg>
<svg class="a" style="left:468px;top:133px;" width="12" height="12" viewBox="0 0 12 12"><path d="M1 1 L11 11 M11 1 L1 11" stroke="#7f8385" stroke-width="1.4"/></svg>
<svg class="a" style="left:503px;top:131px;" width="22" height="19" viewBox="0 0 22 19"><path d="M7 1 H16 V12 H4 V4 Z" fill="#9aa7b0"/><path d="M4 4 L7 1 V4 Z" fill="#6e7678"/><rect x="0" y="10" width="22" height="9" fill="#d9566a"/><text x="11" y="17.6" font-size="8.5" text-anchor="middle" fill="#3a1c22" font-family="Liberation Sans">YML</text></svg>
<svg class="a" style="left:638px;top:133px;" width="12" height="12" viewBox="0 0 12 12"><path d="M1 1 L11 11 M11 1 L1 11" stroke="#7f8385" stroke-width="1.4"/></svg>
<svg class="a" style="left:175px;top:93px;" width="8" height="20" viewBox="0 0 8 20"><path d="M1 1 L7 10 L1 19" stroke="#6a6d70" stroke-width="1.3" fill="none"/></svg>
<svg class="a" style="left:218px;top:93px;" width="8" height="20" viewBox="0 0 8 20"><path d="M1 1 L7 10 L1 19" stroke="#6a6d70" stroke-width="1.3" fill="none"/></svg>
<svg class="a" style="left:235px;top:92px;" width="20" height="21" viewBox="0 0 19 20"><path d="M4.5 0.5 H13.5 V17 H0.5 V4.5 Z" fill="#9aa7b0"/><path d="M0.5 4.5 L4.5 0.5 V4.5 Z" fill="#6e7678"/><circle cx="13" cy="14" r="5.6" fill="#3c3f41"/><circle cx="13" cy="14" r="4.6" fill="#60a8f0"/><path d="M9.7 10.7 L16.3 17.3" stroke="#2462b8" stroke-width="2.2"/></svg>
<svg class="a" style="left:379px;top:92px;" width="14" height="20" viewBox="0 0 14 20"><rect x="1.2" y="1.2" width="11.6" height="17.6" rx="2.5" fill="none" stroke="#1fa8f0" stroke-width="2.4"/><rect x="4.5" y="15" width="5" height="1.6" fill="#1fa8f0"/></svg>
<svg class="a" style="left:606px;top:99px;" width="13" height="8" viewBox="0 0 13 8"><path d="M0 0 H13 L6.5 7.5 Z" fill="#afb1b3"/></svg>
<svg class="a" style="left:671px;top:91px;" width="21" height="21" viewBox="0 0 19 19"><path d="M11.5 0.5 L18 0.5 L5.5 12.5 L2 9 Z" fill="#3fc4f4"/><path d="M11.5 9 L18 9 L11.7 15 L8.5 12 Z" fill="#3fc4f4"/><path d="M8.5 12 L11.7 15 L11.5 15.3 L18 19 L11.5 19 L8.3 15.6 Z" fill="#0a5fae"/><path d="M8.5 12 L11.7 15 L8.3 15.6 Z" fill="#1d8ad0"/><circle cx="15.8" cy="16" r="2.9" fill="#34c83a"/></svg>
<svg class="a" style="left:774px;top:99px;" width="13" height="8" viewBox="0 0 13 8"><path d="M0 0 H13 L6.5 7.5 Z" fill="#afb1b3"/></svg>
<svg class="a" style="left:818px;top:93px;" width="20" height="20" viewBox="0 0 20 20"><path d="M1 1 L16 9 L1 17 Z" fill="#3fae50"/><circle cx="16.5" cy="16.5" r="3" fill="#2fd040"/></svg>
<svg class="a" style="left:852px;top:92px;" width="20" height="20" viewBox="0 0 20 20"><ellipse cx="10" cy="11.5" rx="6" ry="7" fill="#626566"/><path d="M1 8 H19 M1 12 H19 M2 17 H18 M5 2 L8 5 M15 2 L12 5" stroke="#626566" stroke-width="2"/></svg>
<svg class="a" style="left:887px;top:92px;" width="24" height="21" viewBox="0 0 24 21"><path d="M2 3 Q9 0 14 3 V10 Q14 17 8 20 Q2 17 2 10 Z" fill="#5d6062"/><path d="M12 9 L23 15 L12 21 Z" fill="#5d6062"/></svg>
<svg class="a" style="left:925px;top:91px;" width="15" height="22" viewBox="0 0 15 22"><path d="M9 0 L1 13 H7 L5 22 L14 8 H8 Z" fill="#f4a925"/></svg>
<svg class="a" style="left:962px;top:91px;" width="18" height="22" viewBox="0 0 18 22"><rect x="1.2" y="1.2" width="11" height="19" rx="1.5" fill="none" stroke="#8c8e90" stroke-width="2"/><path d="M10 13 L16 7.5 M9.5 18 L16 12" stroke="#2f9ee8" stroke-width="2.5"/></svg>
<svg class="a" style="left:998px;top:91px;" width="24" height="23" viewBox="0 0 24 23"><ellipse cx="10" cy="12" rx="6.5" ry="7.5" fill="#3a9a4a"/><path d="M1 8 H19 M1 12.5 H19 M2 17.5 H18 M5 2 L8 5 M15 2 L12 5" stroke="#3a9a4a" stroke-width="2.2"/><path d="M13 22 L22 13 M16 13 H22 V19" stroke="#c8cacc" stroke-width="2.3" fill="none"/></svg>
<div class="a" style="left:1037px;top:95px;width:14px;height:14px;background:#e05555"></div>
<svg class="a" style="left:1122px;top:93px;" width="17" height="17" viewBox="0 0 17 17"><path d="M15.5 1.5 L3 14 M2 6 V15 H11" stroke="#3592c4" stroke-width="2.6" fill="none"/></svg>
<svg class="a" style="left:1157px;top:92px;" width="21" height="18" viewBox="0 0 21 18"><path d="M1.5 9 L7.5 15.5 L19.5 2" stroke="#499c54" stroke-width="3" fill="none"/></svg>
<svg class="a" style="left:1194px;top:93px;" width="17" height="17" viewBox="0 0 17 17"><path d="M1.5 15.5 L14 3 M6 2 H15 V11" stroke="#499c54" stroke-width="2.6" fill="none"/></svg>
<svg class="a" style="left:1229px;top:92px;" width="21" height="21" viewBox="0 0 21 21"><circle cx="10.5" cy="10.5" r="8.8" fill="none" stroke="#afb1b3" stroke-width="2"/><path d="M10.5 5 V11 L14 13" stroke="#afb1b3" stroke-width="2" fill="none"/></svg>
<svg class="a" style="left:1267px;top:92px;" width="20" height="20" viewBox="0 0 20 20"><path d="M6 6 H12 A5.5 5.5 0 0 1 12 17 H7" stroke="#afb1b3" stroke-width="2" fill="none"/><path d="M7 1.5 L2 6 L7 10.5" stroke="#afb1b3" stroke-width="2" fill="none"/></svg>
<svg class="a" style="left:1313px;top:91px;" width="21" height="23" viewBox="0 0 21 23"><rect x="1.2" y="1.2" width="11" height="18" rx="1.5" fill="none" stroke="#afb1b3" stroke-width="2"/><path d="M9 22 A6 6 0 0 1 21 22 Z" fill="#3ddc84"/></svg>
<svg class="a" style="left:1347px;top:91px;" width="24" height="24" viewBox="0 0 24 24"><path d="M9 1 L16 4.5 V12 L9 15.5 L2 12 V4.5 Z" fill="#afb1b3"/><path d="M2 4.5 L9 8 L16 4.5 M9 8 V15.5" stroke="#3c3f41" stroke-width="1"/><path d="M18 10 V21 M13.5 17 L18 22 L22.5 17" stroke="#2f9ee8" stroke-width="2.3" fill="none"/></svg>
<svg class="a" style="left:1394px;top:91px;" width="22" height="22" viewBox="0 0 22 22"><circle cx="8.5" cy="8.5" r="6.5" fill="none" stroke="#afb1b3" stroke-width="2.3"/><path d="M13.5 13.5 L20 20" stroke="#afb1b3" stroke-width="2.6"/></svg>
<svg class="a" style="left:1430px;top:91px;" width="23" height="23" viewBox="0 0 23 23"><circle cx="11.5" cy="11.5" r="11.5" fill="#f0a30a"/><path d="M11.5 5 L6 10.5 H9.5 V17.5 H13.5 V10.5 H17 Z" fill="#fff"/></svg>
<svg class="a" style="left:1466px;top:91px;" width="23" height="23" viewBox="0 0 23 23"><rect width="23" height="23" fill="#7b9aab"/><circle cx="11.5" cy="8" r="3.6" fill="#dfe4e7"/><path d="M4 23 V18 Q4 13.5 9 13.5 H14 Q19 13.5 19 18 V23 Z" fill="#dfe4e7"/></svg>
<svg class="a" style="left:15px;top:192px;" width="14" height="14" viewBox="0 0 14 14"><path d="M0 0 H5 L6.5 2.5 H14 V14 H0 Z" fill="#cfcfcf" transform="rotate(-90 7 7)"/></svg>
<svg class="a" style="left:16px;top:296px;transform:rotate(-90deg)" width="13" height="12" viewBox="0 0 13 12"><circle cx="6.5" cy="6" r="3.2" fill="none" stroke="#afb1b3" stroke-width="2"/><path d="M6.5 0 V2.8 M6.5 9.2 V12" stroke="#afb1b3" stroke-width="2"/></svg>
<svg class="a" style="left:16px;top:455px;" width="13" height="16" viewBox="0 0 13 16"><path d="M2 1 V15 M2 15 H12 M2 8 L6 4 L10 8 M6 4 V13" stroke="#afb1b3" stroke-width="2" fill="none"/></svg>
<svg class="a" style="left:16px;top:960px;" width="13" height="14" viewBox="0 0 13 14"><rect x="0" y="8" width="5" height="5" fill="#afb1b3"/><rect x="7" y="8" width="5" height="5" fill="#afb1b3"/><rect x="7" y="1" width="5" height="5" fill="#afb1b3"/></svg>
<svg class="a" style="left:14px;top:1076px;" width="19" height="19" viewBox="0 0 19 19"><path d="M9.5 0.5 L12.2 6.6 L18.8 7.2 L13.8 11.5 L15.3 18 L9.5 14.6 L3.7 18 L5.2 11.5 L0.2 7.2 L6.8 6.6 Z" fill="#afb1b3"/></svg>
<svg class="a" style="left:1476px;top:137px;" width="18" height="18" viewBox="0 0 19 19"><path d="M11.5 0.5 L18 0.5 L5.5 12.5 L2 9 Z" fill="#3fc4f4"/><path d="M11.5 9 L18 9 L11.7 15 L8.5 12 Z" fill="#3fc4f4"/><path d="M8.5 12 L11.7 15 L11.5 15.3 L18 19 L11.5 19 L8.3 15.6 Z" fill="#0a5fae"/><path d="M8.5 12 L11.7 15 L8.3 15.6 Z" fill="#1d8ad0"/></svg>
<svg class="a" style="left:1476px;top:298px;" width="18" height="18" viewBox="0 0 19 19"><path d="M11.5 0.5 L18 0.5 L5.5 12.5 L2 9 Z" fill="#3fc4f4"/><path d="M11.5 9 L18 9 L11.7 15 L8.5 12 Z" fill="#3fc4f4"/><path d="M8.5 12 L11.7 15 L11.5 15.3 L18 19 L11.5 19 L8.3 15.6 Z" fill="#0a5fae"/><path d="M8.5 12 L11.7 15 L8.3 15.6 Z" fill="#1d8ad0"/><circle cx="15.8" cy="16" r="2.9" fill="#34c83a"/></svg>
<svg class="a" style="left:1476px;top:497px;transform:rotate(90deg)" width="18" height="18" viewBox="0 0 18 18"><rect x="1" y="4" width="10" height="13" rx="1.5" fill="none" stroke="#afb1b3" stroke-width="1.8"/><rect x="8" y="1" width="9" height="12" rx="1" fill="#3c3f41" stroke="#afb1b3" stroke-width="1.8"/></svg>
<svg class="a" style="left:1476px;top:669px;" width="18" height="18" viewBox="0 0 19 19"><path d="M11.5 0.5 L18 0.5 L5.5 12.5 L2 9 Z" fill="#3fc4f4"/><path d="M11.5 9 L18 9 L11.7 15 L8.5 12 Z" fill="#3fc4f4"/><path d="M8.5 12 L11.7 15 L11.5 15.3 L18 19 L11.5 19 L8.3 15.6 Z" fill="#0a5fae"/><path d="M8.5 12 L11.7 15 L8.3 15.6 Z" fill="#1d8ad0"/><circle cx="15.8" cy="16" r="2.9" fill="#34c83a"/></svg>
<svg class="a" style="left:1476px;top:846px;transform:rotate(90deg)" width="18" height="18" viewBox="0 0 18 18"><rect x="3" y="1" width="12" height="16" rx="1.5" fill="none" stroke="#afb1b3" stroke-width="1.8"/><rect x="6" y="13" width="6" height="2" fill="#afb1b3"/></svg>
<svg class="a" style="left:1476px;top:1043px;transform:rotate(90deg)" width="18" height="18" viewBox="0 0 18 18"><rect x="1" y="5" width="9" height="12" fill="none" stroke="#afb1b3" stroke-width="1.8"/><rect x="11" y="1" width="6" height="9" fill="none" stroke="#afb1b3" stroke-width="1.5"/></svg>
<svg class="a" style="left:51px;top:1118px;" width="16" height="16" viewBox="0 0 16 16"><path d="M2 1 V15 M2 11 H8 Q13 11 13 6 V3 M9.5 6 L13 2.5 L16.5 6" stroke="#afb1b3" stroke-width="2" fill="none"/></svg>
<svg class="a" style="left:124px;top:1118px;" width="12" height="15" viewBox="0 0 12 15"><path d="M1 1 L11 7.5 L1 14 Z" fill="#afb1b3"/></svg>
<svg class="a" style="left:200px;top:1119px;" width="16" height="14" viewBox="0 0 16 14"><path d="M0 1.5 H3 M0 7 H3 M0 12.5 H3 M5 1.5 H16 M5 7 H16 M5 12.5 H16" stroke="#afb1b3" stroke-width="2.2"/></svg>
<svg class="a" style="left:295px;top:1117px;" width="17" height="17" viewBox="0 0 17 17"><circle cx="8.5" cy="8.5" r="8.5" fill="#afb1b3"/><rect x="7.2" y="3.5" width="2.6" height="7" fill="#3c3f41"/><rect x="7.2" y="11.8" width="2.6" height="2.4" fill="#3c3f41"/></svg>
<svg class="a" style="left:414px;top:1117px;" width="17" height="16" viewBox="0 0 17 16"><rect width="17" height="16" fill="#afb1b3"/><path d="M3 4 L7 7.5 L3 11" stroke="#3c3f41" stroke-width="1.8" fill="none"/><path d="M8 12 H13" stroke="#3c3f41" stroke-width="1.8"/></svg>
<svg class="a" style="left:527px;top:1115px;" width="20" height="20" viewBox="0 0 20 20"><path d="M6 3 L14 1 L19 12 L8 16 Z" fill="#afb1b3"/><path d="M8 6 L15 5 M9 9 L16 8" stroke="#3c3f41" stroke-width="1.2"/><circle cx="5.5" cy="14.5" r="4.5" fill="#f0a30a"/></svg>
<svg class="a" style="left:1361px;top:1116px;" width="19" height="19" viewBox="0 0 19 19"><circle cx="9.5" cy="9.5" r="9.5" fill="#28a745"/><text x="9.5" y="14.5" font-size="13" font-weight="bold" text-anchor="middle" fill="#fff" font-family="Liberation Sans">4</text></svg>
<svg class="a" style="left:18px;top:1145px;" width="18" height="18" viewBox="0 0 18 18"><rect x="5" y="1" width="12" height="12" fill="none" stroke="#afb1b3" stroke-width="1.6"/><path d="M1.8 4.5 V16.2 H13.5" stroke="#afb1b3" stroke-width="1.6" fill="none"/></svg>
<svg class="a" style="left:1311px;top:1145px;" width="12" height="20" viewBox="0 0 12 20"><circle cx="2.5" cy="3" r="2" fill="#afb1b3"/><path d="M2.5 3 V19 M2.5 15 Q3 9 10 5" stroke="#afb1b3" stroke-width="2" fill="none"/></svg>
<svg class="a" style="left:1396px;top:1146px;" width="19" height="17" viewBox="0 0 19 17"><path d="M3 8 V4.5 A3.2 3.2 0 0 1 9.4 4.5" stroke="#afb1b3" stroke-width="2" fill="none"/><rect x="5" y="8" width="11" height="8" fill="#afb1b3"/></svg>
<svg class="a" style="left:1429px;top:1144px;" width="22" height="22" viewBox="0 0 22 22"><circle cx="11" cy="11" r="10" fill="#afb1b3"/><circle cx="7.5" cy="8.5" r="1.4" fill="#3c3f41"/><circle cx="14.5" cy="8.5" r="1.4" fill="#3c3f41"/><path d="M6.5 13 Q11 17.5 15.5 13" stroke="#3c3f41" stroke-width="1.6" fill="none"/></svg>
<svg class="a" style="left:1463px;top:1144px;" width="22" height="22" viewBox="0 0 22 22"><circle cx="11" cy="11" r="10" fill="#afb1b3"/><circle cx="7.5" cy="8.5" r="1.4" fill="#3c3f41"/><circle cx="14.5" cy="8.5" r="1.4" fill="#3c3f41"/><path d="M6.5 16 Q11 11.5 15.5 16" stroke="#3c3f41" stroke-width="1.6" fill="none"/></svg>
<svg class="a" style="left:27px;top:4px;" width="21" height="25" viewBox="0 0 21 25"><path d="M15.2 13.1c0-2.6 2.1-3.8 2.2-3.9-1.2-1.8-3.1-2-3.7-2-1.6-.2-3.1.9-3.9.9-.8 0-2-.9-3.3-.9-1.7 0-3.3 1-4.2 2.5-1.8 3.100-.5 7.700 1.300 10.200.9 1.200 1.900 2.600 3.200 2.600 1.300-.1 1.800-.8 3.300-.8 1.600 0 2 .8 3.300.8 1.400 0 2.300-1.300 3.100-2.500 1-1.400 1.400-2.800 1.400-2.900-.1 0-2.700-1-2.700-4zM12.700 5.500c.7-.9 1.200-2.100 1.100-3.300-1 0-2.300.7-3 1.600-.7.800-1.200 2-1.100 3.200 1.100.1 2.300-.6 3-1.500z" fill="#111"/></svg>
<svg class="a" style="left:1405px;top:6px;" width="20" height="20" viewBox="0 0 20 20"><circle cx="10" cy="10" r="9.5" fill="#111"/><path d="M9 4 V13.5 Q9 15.5 11.5 15.5 H13 M6.5 7.5 H13" stroke="#fff" stroke-width="2.2" fill="none"/></svg>
<svg class="a" style="left:1449px;top:5px;" width="22" height="22" viewBox="0 0 22 22"><rect x="0.5" y="0.5" width="21" height="21" rx="2" fill="#b9a6b6"/><path d="M11 6 L16.5 15.5 H5.5 Z" fill="none" stroke="#e8dde6" stroke-width="2"/></svg>
<svg class="a" style="left:1495px;top:5px;" width="18" height="22" viewBox="0 0 18 22"><path d="M5 6 L13 14 L9 18 V4 L13 8 L5 16" stroke="#555" stroke-width="1.5" fill="none"/><path d="M1 1 L17 21" stroke="#555" stroke-width="1.5"/></svg>
<svg class="a" style="left:1537px;top:7px;" width="37" height="18" viewBox="0 0 37 18"><rect x="1" y="1" width="31" height="16" rx="4.5" fill="none" stroke="#555" stroke-width="1.4"/><rect x="4" y="4" width="20" height="10" rx="2" fill="#111"/><rect x="33.5" y="6" width="2" height="6" rx="1" fill="#666"/></svg>
<svg class="a" style="left:1599px;top:6px;" width="26" height="20" viewBox="0 0 26 20"><path d="M2 7 Q13 -3 24 7" stroke="#111" stroke-width="2.6" fill="none"/><path d="M6 11 Q13 4 20 11" stroke="#111" stroke-width="2.6" fill="none"/><path d="M13 19 L9.5 14.5 Q13 11.5 16.5 14.5 Z" fill="#111"/></svg>
<svg class="a" style="left:1650px;top:6px;" width="22" height="22" viewBox="0 0 22 22"><circle cx="8.5" cy="8.5" r="6.3" fill="none" stroke="#111" stroke-width="2.3"/><path d="M13 13 L19.5 19.5" stroke="#111" stroke-width="2.6"/></svg>
<svg class="a" style="left:1694px;top:5px;" width="23" height="22" viewBox="0 0 23 22"><rect x="1" y="1" width="21" height="9" rx="4.5" fill="none" stroke="#111" stroke-width="1.8"/><circle cx="6" cy="5.5" r="3" fill="#111"/><rect x="1" y="12" width="21" height="9" rx="4.5" fill="#111"/><circle cx="17" cy="16.5" r="2.6" fill="#efd3ec"/></svg>
<svg class="a" style="left:1739px;top:6px;" width="21" height="21" viewBox="0 0 21 21"><defs><radialGradient id="sg" cx="35%" cy="35%" r="70%"><stop offset="0" stop-color="#f070c0"/><stop offset=".5" stop-color="#6a40d0"/><stop offset="1" stop-color="#20a0c0"/></radialGradient></defs><circle cx="10.5" cy="10.5" r="10" fill="url(#sg)"/><path d="M3 11 Q7 6 10.5 11 T18 10" stroke="#fff" stroke-width="1.5" fill="none" opacity=".8"/></svg>
<div class="a" style="left:438px;top:160px;width:14px;height:652.3px;background:#2f4f34;"></div>
<div class="a" style="left:438px;top:966.7px;width:14px;height:40.6px;background:#2f4f34;"></div>
<div class="a" style="left:438px;top:1047.9px;width:14px;height:62.09999999999991px;background:#2d4a5e;"></div>
<div class="a" style="left:437px;top:276.8px;width:1px;height:486.59999999999997px;background:#4e8a7a;"></div>
<div class="a" style="left:452px;top:160px;width:1px;height:950px;background:#5a5d5f;"></div>
<svg class="a" style="left:445px;top:205px;" width="16" height="21" viewBox="0 0 16 21"><path d="M1 8 L8 1 L15 8 V20 H1 Z" fill="#2b2b2b" stroke="#6b6e70" stroke-width="1.1"/><path d="M5 13 H11" stroke="#6b6e70" stroke-width="1.2"/></svg>
<svg class="a" style="left:445px;top:611px;" width="16" height="21" viewBox="0 0 16 21"><path d="M1 8 L8 1 L15 8 V20 H1 Z" fill="#2b2b2b" stroke="#6b6e70" stroke-width="1.1"/><path d="M5 13 H11" stroke="#6b6e70" stroke-width="1.2"/></svg>
<svg class="a" style="left:445px;top:651px;" width="16" height="21" viewBox="0 0 16 21"><path d="M1 8 L8 1 L15 8 V20 H1 Z" fill="#2b2b2b" stroke="#6b6e70" stroke-width="1.1"/><path d="M5 13 H11" stroke="#6b6e70" stroke-width="1.2"/></svg>
<svg class="a" style="left:445px;top:692px;" width="16" height="21" viewBox="0 0 16 21"><path d="M1 8 L8 1 L15 8 V20 H1 Z" fill="#2b2b2b" stroke="#6b6e70" stroke-width="1.1"/><path d="M5 13 H11" stroke="#6b6e70" stroke-width="1.2"/></svg>
<svg class="a" style="left:445px;top:732px;" width="16" height="21" viewBox="0 0 16 21"><path d="M1 8 L8 1 L15 8 V20 H1 Z" fill="#2b2b2b" stroke="#6b6e70" stroke-width="1.1"/><path d="M5 13 H11" stroke="#6b6e70" stroke-width="1.2"/></svg>
<svg class="a" style="left:445px;top:286px;" width="16" height="21" viewBox="0 0 16 21"><path d="M1 1 H15 V13 L8 20 L1 13 Z" fill="#2b2b2b" stroke="#6b6e70" stroke-width="1.1"/><path d="M5 8 H11" stroke="#6b6e70" stroke-width="1.2"/></svg>
<svg class="a" style="left:445px;top:326px;" width="16" height="21" viewBox="0 0 16 21"><path d="M1 1 H15 V13 L8 20 L1 13 Z" fill="#2b2b2b" stroke="#6b6e70" stroke-width="1.1"/><path d="M5 8 H11" stroke="#6b6e70" stroke-width="1.2"/></svg>
<svg class="a" style="left:445px;top:367px;" width="16" height="21" viewBox="0 0 16 21"><path d="M1 1 H15 V13 L8 20 L1 13 Z" fill="#2b2b2b" stroke="#6b6e70" stroke-width="1.1"/><path d="M5 8 H11" stroke="#6b6e70" stroke-width="1.2"/></svg>
<svg class="a" style="left:445px;top:529px;" width="16" height="21" viewBox="0 0 16 21"><path d="M1 1 H15 V13 L8 20 L1 13 Z" fill="#2b2b2b" stroke="#6b6e70" stroke-width="1.1"/><path d="M5 8 H11" stroke="#6b6e70" stroke-width="1.2"/></svg>
<svg class="a" style="left:445px;top:854px;" width="16" height="21" viewBox="0 0 16 21"><path d="M1 1 H15 V13 L8 20 L1 13 Z" fill="#2b2b2b" stroke="#6b6e70" stroke-width="1.1"/><path d="M5 8 H11" stroke="#6b6e70" stroke-width="1.2"/></svg>
<svg class="a" style="left:445px;top:895px;" width="16" height="21" viewBox="0 0 16 21"><path d="M1 1 H15 V13 L8 20 L1 13 Z" fill="#2b2b2b" stroke="#6b6e70" stroke-width="1.1"/><path d="M5 8 H11" stroke="#6b6e70" stroke-width="1.2"/></svg>
<svg class="a" style="left:445px;top:935px;" width="16" height="21" viewBox="0 0 16 21"><path d="M1 1 H15 V13 L8 20 L1 13 Z" fill="#2b2b2b" stroke="#6b6e70" stroke-width="1.1"/><path d="M5 8 H11" stroke="#6b6e70" stroke-width="1.2"/></svg>
<svg class="a" style="left:445px;top:1017px;" width="16" height="21" viewBox="0 0 16 21"><path d="M1 1 H15 V13 L8 20 L1 13 Z" fill="#2b2b2b" stroke="#6b6e70" stroke-width="1.1"/><path d="M5 8 H11" stroke="#6b6e70" stroke-width="1.2"/></svg>
<svg class="a" style="left:445px;top:1057px;" width="16" height="21" viewBox="0 0 16 21"><path d="M1 1 H15 V13 L8 20 L1 13 Z" fill="#2b2b2b" stroke="#6b6e70" stroke-width="1.1"/><path d="M5 8 H11" stroke="#6b6e70" stroke-width="1.2"/></svg>
<svg class="a" style="left:473px;top:699px;" width="18" height="24" viewBox="0 0 18 24"><circle cx="9" cy="8" r="7" fill="#f0a30a"/><rect x="5" y="13" width="8" height="3" fill="#f0a30a"/><path d="M5.5 18 H12.5 M6 21 H12" stroke="#bbb" stroke-width="1.6"/></svg>
<svg class="a" style="left:397px;top:853.2px;" width="26" height="26" viewBox="0 0 26 26"><circle cx="8" cy="13" r="6.5" fill="#3592c4"/><circle cx="8" cy="13" r="2.6" fill="#2b2b2b"/><circle cx="8" cy="13" r="1.3" fill="#3592c4"/><path d="M19 25 V4 M14.5 8.5 L19 3 L23.5 8.5" stroke="#e0534a" stroke-width="2" fill="none"/></svg>
<div class="a" style="left:397px;top:973.5px;width:27px;height:27px;background:#000;"></div>
<div class="a" style="left:489px;top:160px;width:1px;height:45px;background:#3b3b3b;"></div>
<div class="a" style="left:516px;top:358.0px;width:1px;height:28px;background:#5d5d5d;"></div>
<div class="a" style="left:516px;top:385.0px;width:24px;height:1px;background:#5d5d5d;"></div>
<div class="a" style="left:516px;top:398.6px;width:1px;height:283.6px;background:#3b3b3b;"></div>
<div class="a" style="left:572px;top:561.0px;width:1px;height:40px;background:#3b3b3b;"></div>
<div class="a" style="left:516px;top:926.4px;width:1px;height:28px;background:#5d5d5d;"></div>
<div class="a" style="left:516px;top:953.4px;width:24px;height:1px;background:#5d5d5d;"></div>
<div class="a" style="left:516px;top:967.0px;width:1px;height:143.0px;background:#5d5d5d;"></div>
<div class="a" style="left:543px;top:967.0px;width:1px;height:67.59999999999991px;background:#5d5d5d;"></div>
<div class="a" style="left:543px;top:1034.6px;width:24px;height:1px;background:#5d5d5d;"></div>
<div class="a" style="left:572px;top:1048.2px;width:1px;height:28px;background:#5d5d5d;"></div>
<div class="a" style="left:572px;top:1075.2px;width:24px;height:1px;background:#5d5d5d;"></div>
<div class="a" style="left:600px;top:1088.8000000000002px;width:1px;height:21.199999999999818px;background:#5d5d5d;"></div>
<div class="a" style="left:505px;top:726.4px;width:2px;height:34px;background:#bbbbbb;"></div>
<svg class="a" style="left:1334px;top:170px;" width="18" height="16" viewBox="0 0 18 16"><path d="M9 1 L17 15 H1 Z" fill="#f0a732"/><rect x="8" y="5.5" width="2" height="5.5" fill="#2b2b2b"/><rect x="8" y="12" width="2" height="2" fill="#2b2b2b"/></svg>
<div class="a nw" style="left:1355px;top:168px;font-size:16px;color:#a9b7c6">1</div>
<svg class="a" style="left:1374px;top:170px;" width="18" height="18" viewBox="0 0 18 18"><path d="M1.5 7 L6.5 12 L16 2" stroke="#2fae50" stroke-width="2.8" fill="none"/><path d="M2 16 L4.5 13.5 L7 16 L9.5 13.5 L12 16" stroke="#2fae50" stroke-width="1.4" fill="none"/></svg>
<div class="a nw" style="left:1394px;top:168px;font-size:16px;color:#a9b7c6">1</div>
<svg class="a" style="left:1416px;top:173px;" width="14" height="10" viewBox="0 0 14 10"><path d="M1 8 L7 2 L13 8" stroke="#afb1b3" stroke-width="1.7" fill="none"/></svg>
<svg class="a" style="left:1445px;top:173px;" width="14" height="10" viewBox="0 0 14 10"><path d="M1 2 L7 8 L13 2" stroke="#afb1b3" stroke-width="1.7" fill="none"/></svg>
<div class="a" style="left:1444px;top:213px;width:3px;height:7px;background:#3f7a4c;"></div>
<div class="a" style="left:1444px;top:299px;width:3px;height:285px;background:#3f7a4c;"></div>
<div class="a" style="left:1444px;top:669px;width:3px;height:7px;background:#3f7a4c;"></div>
<div class="a" style="left:1444px;top:703px;width:3px;height:203px;background:#3a6a9a;"></div>
<div class="a" style="left:1455px;top:338px;width:10px;height:389px;background:#4b4d4f;border-radius:5px"></div>
<div class="a" style="left:1450px;top:415px;width:19px;height:3px;background:#c09a30;"></div>
<div class="a" style="left:1500px;top:44px;width:509px;height:80px;border-radius:12px;background:#3a2c38;box-shadow:0 0 0 1px rgba(30,10,30,.5)">
<div class="a" style="left:10.5px;top:11.5px;width:17px;height:17px;border-radius:50%;background:#5a4a57"></div>
<div class="a" style="left:38.5px;top:11.5px;width:17px;height:17px;border-radius:50%;background:#5a4a57"></div>
<div class="a" style="left:66.5px;top:11.5px;width:17px;height:17px;border-radius:50%;background:#5a4a57"></div>
<div class="a nw" style="left:124px;top:9px;font-size:18.5px;font-weight:bold;color:#7e6d7b">iPhone 14 Pro Max – iOS 16.1</div>
</div>
<svg class="a" style="left:1692px;top:88px;" width="22" height="20" viewBox="0 0 22 20"><path d="M1.5 10 L11 1.5 L20.5 10 M4 8 V19 H18 V8 M9 19 V13 H13 V19" stroke="#7e6d7b" stroke-width="1.8" fill="none"/><path d="M16 1.5 V5" stroke="#7e6d7b" stroke-width="1.8"/></svg>
<svg class="a" style="left:1752px;top:88px;" width="25" height="20" viewBox="0 0 25 20"><rect x="4" y="4" width="20" height="15" rx="2" fill="none" stroke="#7e6d7b" stroke-width="1.8"/><path d="M1 16 V3 Q1 1 3 1 H20" stroke="#7e6d7b" stroke-width="1.8" fill="none"/><circle cx="14" cy="12" r="4" fill="none" stroke="#7e6d7b" stroke-width="1.8"/></svg>
<svg class="a" style="left:1809px;top:87px;" width="20" height="22" viewBox="0 0 20 22"><rect x="6" y="8" width="13" height="13" rx="1" fill="none" stroke="#7e6d7b" stroke-width="1.8"/><path d="M2 9 V5 Q2 3 4 3 H8" stroke="#7e6d7b" stroke-width="1.8" fill="none"/><path d="M6.5 0.5 L9.5 3 L6.5 5.5" stroke="#7e6d7b" stroke-width="1.5" fill="none"/></svg>
<div class="a" style="left:1668px;top:124px;width:82px;height:16px;background:#4f96be"></div>
<div class="a" style="left:1862px;top:124px;width:82px;height:14px;border-radius:0 0 6px 6px;background:#4f96be"></div>
<div class="a" style="left:1512px;top:139px;width:484px;height:1007px;border-radius:94px;background:#323232;box-shadow:0 0 0 1px rgba(210,190,210,.45)"></div>
<div class="a" style="left:1506px;top:318px;width:6px;height:35px;border-radius:2px 0 0 2px;background:#2a2a2a"></div>
<div class="a" style="left:1506px;top:386px;width:6px;height:69px;border-radius:2px 0 0 2px;background:#2a2a2a"></div>
<div class="a" style="left:1506px;top:474px;width:6px;height:70px;border-radius:2px 0 0 2px;background:#2a2a2a"></div>
<div class="a" style="left:1996px;top:440px;width:5px;height:100px;border-radius:0 2px 2px 0;background:#2a2a2a"></div>
<div class="a" style="left:1518px;top:145px;width:472px;height:995px;border-radius:88px;background:#000;overflow:hidden">
<div class="a" style="left:12px;top:184.0px;width:448px;height:108px;border-radius:4px;background:#f44336"></div>
<div class="a" style="left:12px;top:293.2px;width:448px;height:108px;border-radius:4px;background:#ffeb3b"></div>
<div class="a" style="left:12px;top:402.4px;width:448px;height:108px;border-radius:4px;background:#ff9800"></div>
<div class="a" style="left:12px;top:511.6px;width:448px;height:108px;border-radius:4px;background:#4caf50"></div>
<div class="a" style="left:12px;top:620.8px;width:448px;height:108px;border-radius:4px;background:#009688"></div>
<div class="a" style="left:12px;top:730.0px;width:448px;height:108px;border-radius:4px;background:#2196f3"></div>
<div class="a" style="left:12px;top:839.2px;width:448px;height:108px;border-radius:4px 4px 14px 14px / 4px 4px 50px 50px;background:#9c27b0"></div>
<div class="a" style="left:156px;top:970px;width:160px;height:5px;border-radius:3px;background:#2e2e2e"></div>
<div class="a" style="left:360px;top:14px;width:100px;height:100px;overflow:hidden">
<div class="a nw" style="left:5px;top:12.8px;width:130px;height:13px;background:#861616;transform:rotate(45deg);color:#fff;font-size:10px;font-weight:bold;text-align:center;line-height:13px;letter-spacing:.4px">DEBUG</div>
</div>
</div>
<div class="a" style="left:58px;top:1168px;width:1899px;height:84px;border-radius:18px;background:linear-gradient(90deg,#7858c6 0px,#7a5cc8 500px,#7660d0 900px,#8a5ce0 1200px,#a456f0 1400px,#b450f8 1500px,#a858f8 1700px,#a058f8 1899px);box-shadow:inset 0 1px 0 rgba(255,255,255,.3),0 0 0 1px rgba(60,20,120,.35)"></div>
<svg class="a" style="left:70px;top:1181px" width="53" height="53" viewBox="0 0 53 53"><defs><clipPath id="fc"><rect width="53" height="53" rx="12"/></clipPath></defs><g clip-path="url(#fc)"><rect width="53" height="53" fill="#e9eef3"/><path d="M0 0 H30 Q22 18 24 30 H27 Q26 42 29 53 H0 Z" fill="#2d9cf2"/></g><path d="M11 36 Q26 46 42 36" stroke="#1a2a3a" stroke-width="1.8" fill="none"/><rect x="15" y="15" width="2" height="5" fill="#1a2a3a"/><rect x="35" y="15" width="2" height="5" fill="#1a2a3a"/></svg>
<svg class="a" style="left:140px;top:1181px" width="53" height="53" viewBox="0 0 53 53"><rect width="53" height="53" rx="12" fill="#dcd6ee"/><rect x="9" y="9" width="10" height="10" rx="2.5" fill="#3ec24a"/><rect x="22" y="9" width="10" height="10" rx="2.5" fill="#f4b21a"/><rect x="35" y="9" width="10" height="10" rx="2.5" fill="#f4801a"/><rect x="9" y="22" width="10" height="10" rx="2.5" fill="#e02a2a"/><rect x="22" y="22" width="10" height="10" rx="2.5" fill="#9aa0a8"/><rect x="35" y="22" width="10" height="10" rx="2.5" fill="#f04a6a"/><rect x="9" y="35" width="10" height="10" rx="2.5" fill="#a050e0"/><rect x="22" y="35" width="10" height="10" rx="2.5" fill="#1aa0f0"/><rect x="35" y="35" width="10" height="10" rx="2.5" fill="#30c890"/></svg>
<svg class="a" style="left:211px;top:1181px" width="53" height="53" viewBox="0 0 53 53"><rect width="53" height="53" rx="12" fill="#f4f4f6"/><circle cx="26.5" cy="26.5" r="22" fill="#1e86e8"/><circle cx="26.5" cy="26.5" r="18" fill="none" stroke="#bfe0ff" stroke-width="1.2" stroke-dasharray="1 2"/><path d="M40 13 L29 29 L24 24 Z" fill="#f04040"/><path d="M13 40 L24 24 L29 29 Z" fill="#fff"/></svg>
<svg class="a" style="left:282px;top:1181px" width="53" height="53" viewBox="0 0 53 53"><defs><linearGradient id="mg" x1="0" y1="0" x2="0" y2="1"><stop offset="0" stop-color="#1a70f0"/><stop offset="1" stop-color="#22b8f8"/></linearGradient></defs><rect width="53" height="53" rx="12" fill="url(#mg)"/><rect x="8" y="14" width="37" height="25" rx="2" fill="#f2f2f2"/><path d="M8.5 15 L26.5 29 L44.5 15" stroke="#b8b8b8" stroke-width="1.4" fill="none"/></svg>
<svg class="a" style="left:352px;top:1181px" width="53" height="53" viewBox="0 0 53 53"><rect width="53" height="53" rx="12" fill="#34c84a"/><rect x="8" y="16" width="25" height="21" rx="5" fill="#f4f4f4"/><path d="M35 24 L45 17 V36 L35 29 Z" fill="#f4f4f4"/></svg>
<svg class="a" style="left:422px;top:1181px" width="53" height="53" viewBox="0 0 53 53"><rect width="53" height="53" rx="12" fill="#34c84a"/><ellipse cx="26.5" cy="25" rx="19" ry="15" fill="#f4f4f4"/><path d="M14 34 Q13 41 9 43 Q17 42 20 37 Z" fill="#f4f4f4"/></svg>
<svg class="a" style="left:493px;top:1181px" width="53" height="53" viewBox="0 0 53 53"><defs><clipPath id="mc"><rect width="53" height="53" rx="12"/></clipPath></defs><g clip-path="url(#mc)"><rect width="53" height="53" fill="#f0f0f0"/><path d="M30 0 H53 V28 Q38 22 30 0 Z" fill="#5ac85a"/><path d="M0 25 Q10 30 14 53 H0 Z" fill="#f0a0c8"/><path d="M36 53 L40 38 L53 42 V53 Z" fill="#f8d040"/><path d="M20 0 V53" stroke="#3a8af0" stroke-width="5"/></g><circle cx="20" cy="32" r="10" fill="#fff"/><circle cx="20" cy="32" r="8" fill="#2a7af0"/><path d="M20 26 L24 37 L20 34.5 L16 37 Z" fill="#fff"/></svg>
<svg class="a" style="left:562px;top:1181px" width="53" height="53" viewBox="0 0 53 53"><rect width="53" height="53" rx="12" fill="#f8f8f8"/><ellipse cx="26.5" cy="15" rx="6" ry="11" fill="#f8a020" opacity=".85" transform="rotate(0 26.5 26.5)"/><ellipse cx="26.5" cy="15" rx="6" ry="11" fill="#f8d020" opacity=".85" transform="rotate(45 26.5 26.5)"/><ellipse cx="26.5" cy="15" rx="6" ry="11" fill="#a0d040" opacity=".85" transform="rotate(90 26.5 26.5)"/><ellipse cx="26.5" cy="15" rx="6" ry="11" fill="#40b870" opacity=".85" transform="rotate(135 26.5 26.5)"/><ellipse cx="26.5" cy="15" rx="6" ry="11" fill="#40a8e8" opacity=".85" transform="rotate(180 26.5 26.5)"/><ellipse cx="26.5" cy="15" rx="6" ry="11" fill="#7070d0" opacity=".85" transform="rotate(225 26.5 26.5)"/><ellipse cx="26.5" cy="15" rx="6" ry="11" fill="#c050b0" opacity=".85" transform="rotate(270 26.5 26.5)"/><ellipse cx="26.5" cy="15" rx="6" ry="11" fill="#f04850" opacity=".85" transform="rotate(315 26.5 26.5)"/></svg>
<svg class="a" style="left:633px;top:1181px" width="53" height="53" viewBox="0 0 53 53"><rect width="53" height="53" rx="12" fill="#b88448"/><rect x="48" y="14" width="4" height="8" fill="#4ab0e8"/><rect x="48" y="24" width="4" height="8" fill="#f09030"/><rect x="48" y="34" width="4" height="8" fill="#5ac85a"/><circle cx="25" cy="26" r="15" fill="none" stroke="#8a6030" stroke-width="1.5"/><circle cx="25" cy="21" r="5" fill="#8a6030"/><path d="M15 36 Q25 26 35 36" fill="#8a6030"/></svg>
<svg class="a" style="left:703px;top:1181px" width="53" height="53" viewBox="0 0 53 53"><defs><clipPath id="cc"><rect width="53" height="53" rx="12"/></clipPath></defs><g clip-path="url(#cc)"><rect width="53" height="53" fill="#fafafa"/><rect width="53" height="15" fill="#f04a3e"/></g><text x="26.5" y="12" font-size="9.5" font-weight="bold" text-anchor="middle" fill="#fff" font-family="Liberation Sans">NOV</text><text x="26.5" y="45" font-size="29" text-anchor="middle" fill="#222" font-family="Liberation Sans">9</text></svg>
<svg class="a" style="left:774px;top:1181px" width="53" height="53" viewBox="0 0 53 53"><rect width="53" height="53" rx="12" fill="#fafafa"/><circle cx="12" cy="14" r="4" fill="#1a80f0"/><circle cx="12" cy="27" r="4" fill="#f04040"/><circle cx="12" cy="40" r="4" fill="#f09020"/><path d="M20 14 H45 M20 27 H45 M20 40 H45" stroke="#d0d0d0" stroke-width="1.2"/></svg>
<svg class="a" style="left:844px;top:1181px" width="53" height="53" viewBox="0 0 53 53"><defs><clipPath id="nc"><rect width="53" height="53" rx="12"/></clipPath></defs><g clip-path="url(#nc)"><rect width="53" height="53" fill="#f4f0e6"/><rect width="53" height="13" fill="#f8c830"/></g><path d="M4 26 H49 M4 37 H49" stroke="#d8d4ca" stroke-width="1"/></svg>
<svg class="a" style="left:914px;top:1181px" width="53" height="53" viewBox="0 0 53 53"><defs><linearGradient id="mu" x1="0" y1="0" x2="0" y2="1"><stop offset="0" stop-color="#fa5a6a"/><stop offset="1" stop-color="#f02848"/></linearGradient></defs><rect width="53" height="53" rx="12" fill="url(#mu)"/><path d="M21 37 V15 L38 11 V33" stroke="#fff" stroke-width="3.5" fill="none"/><ellipse cx="17" cy="38" rx="5.5" ry="4.5" fill="#fff"/><ellipse cx="34" cy="34" rx="5.5" ry="4.5" fill="#fff"/></svg>
<svg class="a" style="left:985px;top:1181px" width="53" height="53" viewBox="0 0 53 53"><defs><linearGradient id="po" x1="0" y1="0" x2="0" y2="1"><stop offset="0" stop-color="#c060f0"/><stop offset="1" stop-color="#8a30d0"/></linearGradient></defs><rect width="53" height="53" rx="12" fill="url(#po)"/><circle cx="26.5" cy="23" r="15" fill="none" stroke="#fff" stroke-width="2.5"/><circle cx="26.5" cy="23" r="9" fill="none" stroke="#fff" stroke-width="2.5"/><circle cx="26.5" cy="21" r="4" fill="#fff"/><rect x="23.5" y="27" width="6" height="18" rx="3" fill="#fff"/></svg>
<svg class="a" style="left:1055px;top:1181px" width="53" height="53" viewBox="0 0 53 53"><rect width="53" height="53" rx="12" fill="#1c1c1e"/><text x="30" y="33" font-size="19" font-weight="bold" text-anchor="middle" fill="#fff" font-family="Liberation Sans">tv</text><path d="M14 20 Q15 17 17 17 Q17 19 15 20 Z M10 27 Q10 22 14 22 Q15 22 16.5 23 Q18 22 19.5 22.5 Q17.5 24 18 27 Q18.5 29.5 20 30 Q19 34 16.5 34 Q15.5 33.5 14.5 33.5 Q13.5 33.5 12.5 34 Q10 33.5 10 27 Z" fill="#fff"/></svg>
<svg class="a" style="left:1125px;top:1181px" width="53" height="53" viewBox="0 0 53 53"><defs><linearGradient id="nu" x1="0" y1="0" x2="0" y2="1"><stop offset="0" stop-color="#40d040"/><stop offset="1" stop-color="#20a830"/></linearGradient></defs><rect width="53" height="53" rx="12" fill="url(#nu)"/><rect x="9" y="32" width="7" height="13" rx="1.5" fill="#fff"/><rect x="19" y="22" width="7" height="23" rx="1.5" fill="#fff"/><rect x="29" y="10" width="7" height="35" rx="1.5" fill="#fff"/><rect x="39" y="26" width="7" height="19" rx="1.5" fill="#fff"/></svg>
<svg class="a" style="left:1195px;top:1181px" width="53" height="53" viewBox="0 0 53 53"><defs><linearGradient id="ke" x1="0" y1="0" x2="0" y2="1"><stop offset="0" stop-color="#30a8f8"/><stop offset="1" stop-color="#1a78e8"/></linearGradient></defs><rect width="53" height="53" rx="12" fill="url(#ke)"/><rect x="13" y="10" width="27" height="18" fill="#f8f8f8"/><circle cx="26.5" cy="19" r="5" fill="#f09030"/><path d="M26.5 28 V44 M19 45 H34" stroke="#f0f0f0" stroke-width="2"/></svg>
<svg class="a" style="left:1265px;top:1181px" width="53" height="53" viewBox="0 0 53 53"><defs><linearGradient id="pa" x1="0" y1="0" x2="0" y2="1"><stop offset="0" stop-color="#f8a830"/><stop offset="1" stop-color="#f08018"/></linearGradient></defs><rect width="53" height="53" rx="12" fill="url(#pa)"/><path d="M12 43 L40 12 L43 15 L15 45 Z" fill="#f8f0e0"/><path d="M10 47 H44" stroke="#f8d8a0" stroke-width="1"/></svg>
<svg class="a" style="left:1337px;top:1181px" width="53" height="53" viewBox="0 0 53 53"><defs><linearGradient id="ap" x1="0" y1="0" x2="0" y2="1"><stop offset="0" stop-color="#28b0f8"/><stop offset="1" stop-color="#1a6ae8"/></linearGradient></defs><rect width="53" height="53" rx="12" fill="url(#ap)"/><path d="M20 12 L36 40 M33 12 L17 40 M10 33 H43" stroke="#fff" stroke-width="3.5" stroke-linecap="round"/></svg>
<svg class="a" style="left:1407px;top:1181px" width="53" height="53" viewBox="0 0 53 53"><rect width="53" height="53" rx="12" fill="#c8c8cc"/><circle cx="26.5" cy="26.5" r="21" fill="#3a3a3c"/><circle cx="26.5" cy="26.5" r="17" fill="#8e8e93"/><circle cx="26.5" cy="26.5" r="13" fill="none" stroke="#3a3a3c" stroke-width="3"/><path d="M26.5 26.5 L26.5 12 M26.5 26.5 L14 34 M26.5 26.5 L39 34" stroke="#3a3a3c" stroke-width="3"/><circle cx="26.5" cy="26.5" r="4" fill="#3a3a3c"/></svg>
<div class="a" style="left:1483px;top:1180px;width:1px;height:62px;background:#5a3aa8"></div>
<svg class="a" style="left:1507px;top:1175px" width="57" height="64" viewBox="0 0 57 64"><path d="M3 3 Q3 1 5 1 H52 Q54 1 54 3 V50 L28.5 63 L3 50 Z" fill="#0e0e0e"/><text x="28.5" y="32" font-size="21" font-weight="bold" text-anchor="middle" fill="#e8e8e8" font-family="Liberation Sans" transform="scale(1,1.3) translate(0,-7.5)" letter-spacing="-1">EPIC</text><text x="28.5" y="45" font-size="9.5" font-weight="bold" text-anchor="middle" fill="#e8e8e8" font-family="Liberation Sans">GAMES</text><path d="M19 51 H38 L28.5 55 Z" fill="#e8e8e8"/></svg>
<svg class="a" style="left:1579px;top:1181px" width="53" height="53" viewBox="0 0 53 53"><rect x="1" y="1" width="51" height="51" rx="12" fill="#5865f2"/><path d="M14 17 Q20 13 24 14 L25 16 Q26.5 15.5 28 16 L29 14 Q33 13 39 17 Q44 26 43 36 Q38 40 34 40 L32 37 Q30 38 26.5 38 Q23 38 21 37 L19 40 Q15 40 10 36 Q9 26 14 17 Z" fill="#fff"/><ellipse cx="20.5" cy="28" rx="3.2" ry="3.6" fill="#5865f2"/><ellipse cx="32.5" cy="28" rx="3.2" ry="3.6" fill="#5865f2"/></svg>
<svg class="a" style="left:1646px;top:1177px" width="58" height="58" viewBox="0 0 58 58"><circle cx="29" cy="29" r="29" fill="#fafafa"/><path d="M19 20 A10 9 0 0 1 39 20 Z" fill="#3ddc84"/><circle cx="24.5" cy="16" r="1.3" fill="#fff"/><circle cx="33.5" cy="16" r="1.3" fill="#fff"/><path d="M20 8 L22.5 12 M38 8 L35.5 12" stroke="#3ddc84" stroke-width="1.2"/><rect x="13" y="20" width="32" height="24" rx="3" fill="#4285f4"/><rect x="13" y="20" width="6" height="6" fill="#0e3a5a"/><rect x="40" y="20" width="6" height="25" fill="#0e3a5a"/><path d="M29 23 L20 47 M29 23 L38 47" stroke="#0e2a3a" stroke-width="3.2"/><circle cx="29" cy="26" r="2.6" fill="#4285f4" stroke="#0e2a3a" stroke-width="1.5"/></svg>
<svg class="a" style="left:1717px;top:1179px" width="56" height="56" viewBox="0 0 56 56"><defs><radialGradient id="tu" cx="40%" cy="35%" r="70%"><stop offset="0" stop-color="#f02838"/><stop offset="1" stop-color="#b01018"/></radialGradient></defs><circle cx="28" cy="28" r="28" fill="url(#tu)"/><path d="M25 12 V38 Q25 45 32 45 H36 M17 22 H35" stroke="#fff" stroke-width="5" fill="none"/></svg>
<svg class="a" style="left:1790px;top:1181px" width="53" height="53" viewBox="0 0 53 53"><defs><linearGradient id="xc" x1="0" y1="0" x2="0" y2="1"><stop offset="0" stop-color="#28a8f8"/><stop offset="1" stop-color="#1a6ae8"/></linearGradient></defs><rect x="1" y="2" width="48" height="48" rx="11" fill="url(#xc)"/><path d="M19 12 L33 38 M31 12 L17 38 M10 32 H40" stroke="#a8d8ff" stroke-width="2" stroke-linecap="round"/><path d="M32 22 L44 29 L34 50 L22 43 Z" fill="#111" transform="rotate(5 33 36)"/><path d="M30 34 L38 40 M36 32 L30 42" stroke="#ddd" stroke-width="2.5"/></svg>
<div class="a" style="left:1867px;top:1180px;width:1px;height:62px;background:#5a3aa8"></div>
<svg class="a" style="left:1893px;top:1176px" width="50" height="62" viewBox="0 0 50 62"><defs><linearGradient id="tr" x1="0" y1="0" x2="1" y2="0"><stop offset="0" stop-color="#dcd8e4"/><stop offset=".5" stop-color="#f4f2f8"/><stop offset="1" stop-color="#d8d4e0"/></linearGradient></defs><path d="M3 10 H47 L41 56 Q40 60 36 60 H14 Q10 60 9 56 Z" fill="url(#tr)"/><ellipse cx="25" cy="10" rx="22" ry="4" fill="#c8c4d0"/><path d="M8 9 L14 2 L20 8 L26 1 L33 7 L38 3 L43 9 Z" fill="#8a8890"/><path d="M13 8 L17 4 L19 8 Z" fill="#40c0d0"/><path d="M27 6 L32 3 L34 8 Z" fill="#e8e8ea"/><path d="M20 8 L24 4 L26 8 Z" fill="#505058"/></svg>
<div class="a" style="left:93.5px;top:1244px;width:5px;height:5px;border-radius:50%;background:#1b0c3c"></div>
<div class="a" style="left:234.5px;top:1244px;width:5px;height:5px;border-radius:50%;background:#1b0c3c"></div>
<div class="a" style="left:1532.5px;top:1244px;width:5px;height:5px;border-radius:50%;background:#1b0c3c"></div>
<div class="a" style="left:1672.5px;top:1244px;width:5px;height:5px;border-radius:50%;background:#1b0c3c"></div>
<div class="a" style="left:1742.5px;top:1244px;width:5px;height:5px;border-radius:50%;background:#1b0c3c"></div>
<div class="a" style="left:1813.5px;top:1244px;width:5px;height:5px;border-radius:50%;background:#1b0c3c"></div>
</body></html>
